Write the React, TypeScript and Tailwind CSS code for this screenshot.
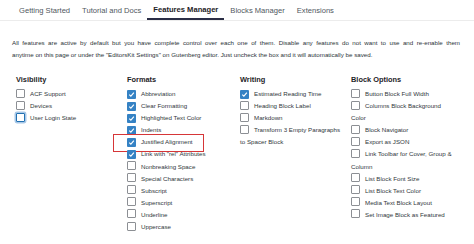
import React from "react";

type Item = { lines: string[]; checked?: boolean; focus?: boolean; marked?: boolean };

const tabs = ["Getting Started", "Tutorial and Docs", "Features Manager", "Blocks Manager", "Extensions"];

const columns: { title: string; items: Item[] }[] = [
  {
    title: "Visibility",
    items: [
      { lines: ["ACF Support"] },
      { lines: ["Devices"] },
      { lines: ["User Login State"], focus: true },
    ],
  },
  {
    title: "Formats",
    items: [
      { lines: ["Abbreviation"], checked: true },
      { lines: ["Clear Formatting"], checked: true },
      { lines: ["Highlighted Text Color"], checked: true },
      { lines: ["Indents"], checked: true },
      { lines: ["Justified Alignment"], checked: true, marked: true },
      { lines: ['Link with "rel" Attributes'], checked: true },
      { lines: ["Nonbreaking Space"] },
      { lines: ["Special Characters"] },
      { lines: ["Subscript"] },
      { lines: ["Superscript"] },
      { lines: ["Underline"] },
      { lines: ["Uppercase"] },
    ],
  },
  {
    title: "Writing",
    items: [
      { lines: ["Estimated Reading Time"], checked: true },
      { lines: ["Heading Block Label"] },
      { lines: ["Markdown"] },
      { lines: ["Transform 3 Empty Paragraphs", "to Spacer Block"] },
    ],
  },
  {
    title: "Block Options",
    items: [
      { lines: ["Button Block Full Width"] },
      { lines: ["Columns Block Background", "Color"] },
      { lines: ["Block Navigator"] },
      { lines: ["Export as JSON"] },
      { lines: ["Link Toolbar for Cover, Group &", "Column"] },
      { lines: ["List Block Font Size"] },
      { lines: ["List Block Text Color"] },
      { lines: ["Media Text Block Layout"] },
      { lines: ["Set Image Block as Featured"] },
    ],
  },
];

function Box({ checked, focus }: { checked?: boolean; focus?: boolean }) {
  if (checked) {
    return (
      <span className="inline-flex h-[9px] w-[9px] items-center justify-center rounded-[1px] bg-[#3582c4] align-[-1.5px]">
        <svg width="7" height="7" viewBox="0 0 10 10">
          <path d="M1.8 5.2 L4.1 7.4 L8.4 2.4" fill="none" stroke="#fff" strokeWidth="1.6" />
        </svg>
      </span>
    );
  }
  return (
    <span
      className={`inline-block h-[9px] w-[9px] rounded-[1px] border bg-white align-[-1.5px] ${
        focus ? "border-[#2271b1] shadow-[0_0_0_1.5px_#a8c8e8]" : "border-[#8c8f94]"
      }`}
    />
  );
}

export default function App() {
  return (
    <div className="h-[244px] w-[474px] overflow-hidden bg-white text-[#32373c] [font-family:'Liberation_Sans',Arial,sans-serif]">
      {/* Tabs */}
      <div className="flex h-[21px] border-b border-[#ececec] pl-[13px]">
        {tabs.map((t) => (
          <div
            key={t}
            className={`flex items-center px-[6px] pt-[1px] text-[7.6px] ${
              t === "Features Manager"
                ? "border-b-[2px] border-[#2a2d45] font-semibold text-[#1d2327]"
                : "text-[#50575e]"
            }`}
          >
            {t}
          </div>
        ))}
      </div>

      <div className="mt-[16px] w-[460px] pl-[12px] text-[6.2px] leading-[12px] text-[#2c3338]">
        <div className="text-justify [text-align-last:justify]">
          All features are active by default but you have complete control over each one of them. Disable any features do not want to use and re-enable them
        </div>
        <div>
          anytime on this page or under the "EditorsKit Settings" on Gutenberg editor. Just uncheck the box and it will automatically be saved.
        </div>
      </div>

      <div className="mt-[14px] grid grid-cols-[111px_113px_111px_120px] pl-[16px]">
        {columns.map((col) => (
          <div key={col.title}>
            <div className="h-[10px] text-[7.4px] font-bold leading-[10px] text-[#1d2327]">{col.title}</div>
            <div className="mt-[3px]">
              {col.items.map((it) => (
                <div key={it.lines[0]} className="relative whitespace-nowrap text-[6.2px] leading-[12.1px]">
                  <Box checked={it.checked} focus={it.focus} />
                  <span className="ml-[5px]">{it.lines[0]}</span>
                  {it.lines.slice(1).map((l) => (
                    <div key={l}>{l}</div>
                  ))}
                  {it.marked && (
                    <span className="absolute left-[-14px] top-[-2px] h-[18px] w-[91px] border-[1.5px] border-[#d63638]" />
                  )}
                </div>
              ))}
            </div>
          </div>
        ))}
      </div>
    </div>
  );
}
